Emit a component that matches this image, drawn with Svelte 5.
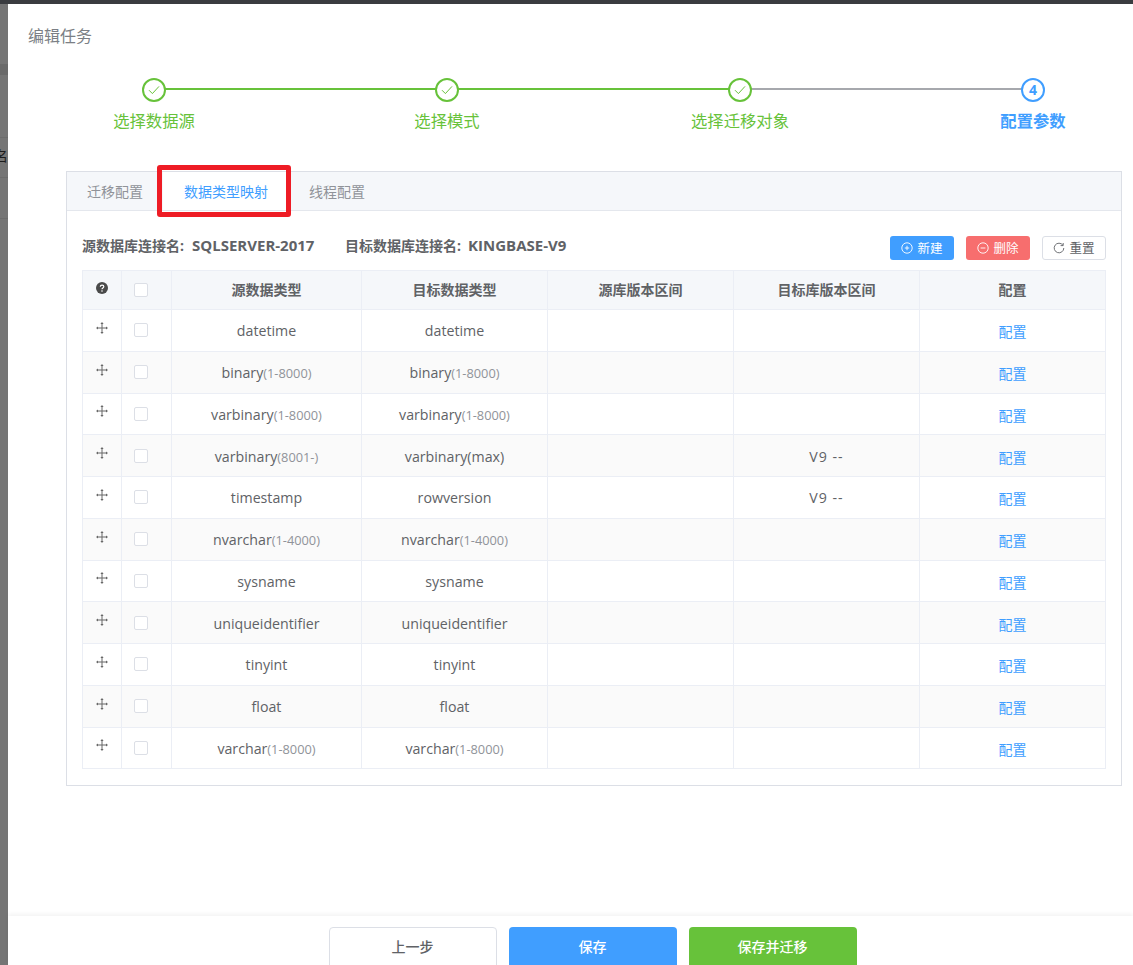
<script>
  const rows = [
    ['datetime', '', 'datetime', '', ''],
    ['binary', '(1-8000)', 'binary', '(1-8000)', ''],
    ['varbinary', '(1-8000)', 'varbinary', '(1-8000)', ''],
    ['varbinary', '(8001-)', 'varbinary(max)', '', 'V9 --'],
    ['timestamp', '', 'rowversion', '', 'V9 --'],
    ['nvarchar', '(1-4000)', 'nvarchar', '(1-4000)', ''],
    ['sysname', '', 'sysname', '', ''],
    ['uniqueidentifier', '', 'uniqueidentifier', '', ''],
    ['tinyint', '', 'tinyint', '', ''],
    ['float', '', 'float', '', ''],
    ['varchar', '(1-8000)', 'varchar', '(1-8000)', '']
  ];
  const steps = [
    { label: '选择数据源', done: true },
    { label: '选择模式', done: true },
    { label: '选择迁移对象', done: true },
    { label: '配置参数', done: false }
  ];
</script>

<div class="page">
  <div class="topbar"></div>
  <div class="body">
    <div class="backdrop">
      <div class="band b1"></div>
      <div class="rule r1"></div>
      <div class="rule r2"></div>
      <div class="rule r3"></div>
      <span class="clip">名</span>
    </div>
    <div class="drawer">
      <h1 class="title">编辑任务</h1>

      <div class="steps">
        {#each steps as s, i}
          <div class="step" class:done={s.done} class:active={!s.done}>
            {#if i < 3}
              <div class="line" class:green={i < 2}></div>
            {/if}
            <div class="circle">
              {#if s.done}
                <svg width="12" height="10" viewBox="0 0 12 10"><path d="M1 5.2 L4.4 8.6 L11 1.4" fill="none" stroke="#67c23a" stroke-width="1"/></svg>
              {:else}
                4
              {/if}
            </div>
            <div class="label">{s.label}</div>
          </div>
        {/each}
      </div>

      <div class="panel">
        <div class="tabs">
          <div class="tab">迁移配置</div>
          <div class="tab on">数据类型映射</div>
          <div class="tab">线程配置</div>
          <div class="redbox"></div>
        </div>
        <div class="content">
          <div class="toolbar">
            <div class="conn">
              <span class="k">源数据库连接名:</span><span class="v">SQLSERVER-2017</span>
              <span class="k second">目标数据库连接名:</span><span class="v last">KINGBASE-V9</span>
            </div>
            <div class="btns">
              <button class="mini primary">
                <svg width="12" height="12" viewBox="0 0 12 12"><circle cx="6" cy="6" r="5.2" fill="none" stroke="currentColor" stroke-width="0.9"/><path d="M3.8 6h4.4M6 3.8v4.4" stroke="currentColor" stroke-width="0.9"/></svg>
                新建
              </button>
              <button class="mini danger">
                <svg width="12" height="12" viewBox="0 0 12 12"><circle cx="6" cy="6" r="5.2" fill="none" stroke="currentColor" stroke-width="0.9"/><path d="M3.6 6h4.8" stroke="currentColor" stroke-width="0.9"/></svg>
                删除
              </button>
              <button class="mini plain">
                <svg width="12" height="12" viewBox="0 0 12 12"><path d="M9.9 3.2 A4.8 4.8 0 1 0 10.8 6" fill="none" stroke="currentColor" stroke-width="0.9"/><path d="M10.2 1v2.6H7.6" fill="none" stroke="currentColor" stroke-width="0.9"/></svg>
                重置
              </button>
            </div>
          </div>

          <table>
            <colgroup>
              <col class="c1" /><col class="c2" /><col class="c3" /><col class="c4" /><col class="c4" /><col class="c4" /><col class="c4" />
            </colgroup>
            <thead>
              <tr>
                <th class="icon-cell">
                  <svg class="help" width="12" height="12" viewBox="0 0 12 12"><circle cx="6" cy="6" r="6" fill="#4a4a4a"/><path d="M4.3 4.7c0-1 .8-1.6 1.8-1.6s1.7.6 1.7 1.5c0 1.4-1.8 1.4-1.8 2.7" fill="none" stroke="#fff" stroke-width="1.2"/><circle cx="6" cy="9" r=".8" fill="#fff"/></svg>
                </th>
                <th><span class="check"></span></th>
                <th>源数据类型</th>
                <th>目标数据类型</th>
                <th>源库版本区间</th>
                <th>目标库版本区间</th>
                <th>配置</th>
              </tr>
            </thead>
            <tbody>
              {#each rows as r, i}
                <tr class:even={i % 2 === 1}>
                  <td class="icon-cell">
                    <svg class="move" width="12" height="12" viewBox="0 0 12 12"><path d="M6 1v10M1 6h10" stroke="#666" stroke-width="1"/><path d="M6 0 7.6 2H4.4zM6 12 7.6 10H4.4zM0 6 2 4.4V7.6zM12 6 10 4.4V7.6z" fill="#666"/></svg>
                  </td>
                  <td><span class="check"></span></td>
                  <td class="txt">{r[0]}<small>{r[1]}</small></td>
                  <td class="txt">{r[2]}<small>{r[3]}</small></td>
                  <td></td>
                  <td class="txt ver">{r[4]}</td>
                  <td class="link">配置</td>
                </tr>
              {/each}
            </tbody>
          </table>
        </div>
      </div>

      <div class="footer">
        <button class="big ghost">上一步</button>
        <button class="big blue">保存</button>
        <button class="big green">保存并迁移</button>
      </div>
    </div>
  </div>
</div>

<style>
  :global(body) {
    margin: 0;
    font-family: "Open Sans", "Noto Sans CJK SC", "Noto Sans", sans-serif;
  }
  .page {
    width: 1133px;
    height: 965px;
    display: flex;
    flex-direction: column;
    overflow: hidden;
    color: #606266;
  }
  .topbar {
    height: 4px;
    background: #3a3c40;
    flex: none;
  }
  .body {
    flex: 1;
    display: flex;
    min-height: 0;
  }
  .backdrop {
    width: 8px;
    flex: none;
    background: #757575;
    position: relative;
    overflow: hidden;
  }
  .band {
    position: absolute;
    left: 0;
    right: 0;
  }
  .b1 {
    top: 60px;
    height: 11px;
    background: #6a6a6a;
  }
  .rule {
    position: absolute;
    left: 0;
    right: 0;
    height: 1px;
    background: #6c6c6c;
  }
  .r1 { top: 133px; }
  .r2 { top: 173px; }
  .r3 { top: 214px; }
  .clip {
    position: absolute;
    top: 143px;
    left: -6px;
    font-size: 14px;
    line-height: 18px;
    color: #1c1c1c;
  }
  .drawer {
    flex: 1;
    min-width: 0;
    background: #fff;
    display: flex;
    flex-direction: column;
    position: relative;
  }
  .title {
    margin: 0;
    font-weight: 400;
    font-size: 16px;
    line-height: 22px;
    color: #7b7f85;
    padding: 21px 0 0 20px;
  }
  .steps {
    display: flex;
    height: 66px;
    margin: 31px 0 0 105px;
    width: 878px;
  }
  .step {
    position: relative;
    width: 293px;
    flex: none;
    text-align: center;
  }
  .step:last-child {
    width: 0;
  }
  .line {
    position: absolute;
    left: 41px;
    width: 285px;
    top: 10px;
    height: 2px;
    background: #a6a8ad;
  }
  .line.green {
    background: #67c23a;
  }
  .circle {
    position: absolute;
    left: 29px;
    top: 0;
    width: 20px;
    height: 20px;
    border: 2px solid #67c23a;
    border-radius: 50%;
    background: #fff;
    display: flex;
    align-items: center;
    justify-content: center;
    font-size: 14px;
    font-weight: 700;
    color: #409eff;
    line-height: 1;
    z-index: 1;
  }
  .active .circle {
    border-color: #409eff;
  }
  .label {
    position: absolute;
    top: 32px;
    left: 41px;
    transform: translateX(-50%);
    white-space: nowrap;
    font-size: 16.35px;
    line-height: 22px;
    color: #67c23a;
  }
  .active .label {
    color: #409eff;
    font-weight: 700;
  }
  .panel {
    margin: 27px 11px 0 58px;
    border: 1px solid #dcdfe6;
    box-sizing: border-box;
    height: 615px;
  }
  .tabs {
    display: flex;
    height: 38px;
    background: #f5f7fa;
    border-bottom: 1px solid #e4e7ed;
    position: relative;
    font-size: 14px;
  }
  .tab {
    line-height: 40px;
    padding: 0 20px;
    color: #909399;
  }
  .tab.on {
    background: #fff;
    color: #409eff;
    padding: 0 21px;
    white-space: nowrap;
  }
  .redbox {
    position: absolute;
    left: 90px;
    top: -7px;
    width: 134px;
    height: 52px;
    box-sizing: border-box;
    border: 5px solid #ee1c25;
    border-radius: 3px;
    pointer-events: none;
  }
  .content {
    padding: 0 15px;
  }
  .toolbar {
    display: flex;
    justify-content: space-between;
    height: 59px;
    align-items: flex-start;
  }
  .conn {
    font-size: 14px;
    font-weight: 700;
    color: #606266;
    line-height: 20px;
    padding-top: 24px;
    white-space: nowrap;
  }
  .conn .v {
    font-size: 15px;
    margin-left: 8px;
  }
  .conn .v.last {
    margin-left: 7px;
  }
  .conn .second {
    margin-left: 27px;
  }
  .btns {
    display: flex;
    gap: 12px;
    padding-top: 25px;
  }
  .mini {
    height: 24px;
    width: 64px;
    box-sizing: border-box;
    border: 1px solid transparent;
    border-radius: 3px;
    font-size: 12.5px;
    font-family: inherit;
    display: flex;
    align-items: center;
    justify-content: center;
    gap: 4px;
    padding: 0 0 1px;
    color: #fff;
  }
  .primary { background: #409eff; }
  .danger { background: #f76e6e; }
  .plain {
    background: #fff;
    border-color: #dcdfe6;
    color: #606266;
  }
  table {
    width: 1024px;
    table-layout: fixed;
    border-collapse: collapse;
    border: 1px solid #ebeef5;
    font-size: 14.2px;
    line-height: 20px;
  }
  .c1 { width: 39px; }
  .c2 { width: 50px; }
  .c3 { width: 190px; }
  .c4 { width: 186px; }
  th, td {
    border: 1px solid #ebeef5;
    text-align: center;
    padding: 0;
    color: #606266;
  }
  th {
    height: 38px;
    background: #f5f7fa;
    font-size: 14px;
    font-weight: 700;
  }
  td {
    height: 41.75px;
    box-sizing: border-box;
    background: #fff;
  }
  .even td {
    background: #fafafa;
  }
  td.txt {
    padding-top: 2px;
  }
  td.ver {
    letter-spacing: 1px;
  }
  td small {
    font-size: 12.8px;
    color: #909399;
  }
  td.link {
    color: #409eff;
    font-size: 14px;
    padding-top: 4px;
  }
  .icon-cell svg {
    display: block;
    margin: -5px auto 0;
  }
  .check {
    display: block;
    width: 12px;
    height: 12px;
    margin: 0 auto;
    border: 1px solid #dcdfe6;
    border-radius: 2px;
    background: #fff;
    position: relative;
    left: -6px;
  }
  .footer {
    position: absolute;
    left: 0;
    right: 0;
    bottom: 0;
    height: 49px;
    box-sizing: border-box;
    padding: 11px 0 0 44px;
    display: flex;
    justify-content: center;
    gap: 12px;
    background: #fff;
    box-shadow: 0 -2px 4px rgba(0,0,0,.05);
  }
  .big {
    width: 168px;
    height: 48px;
    box-sizing: border-box;
    border: 1px solid transparent;
    border-radius: 4px;
    font-size: 14px;
    font-weight: 500;
    font-family: inherit;
    padding: 0 0 10px;
    color: #fff;
  }
  .ghost {
    background: #fff;
    border-color: #dcdfe6;
    color: #606266;
  }
  .blue { background: #409eff; }
  .green { background: #67c23a; }
</style>
